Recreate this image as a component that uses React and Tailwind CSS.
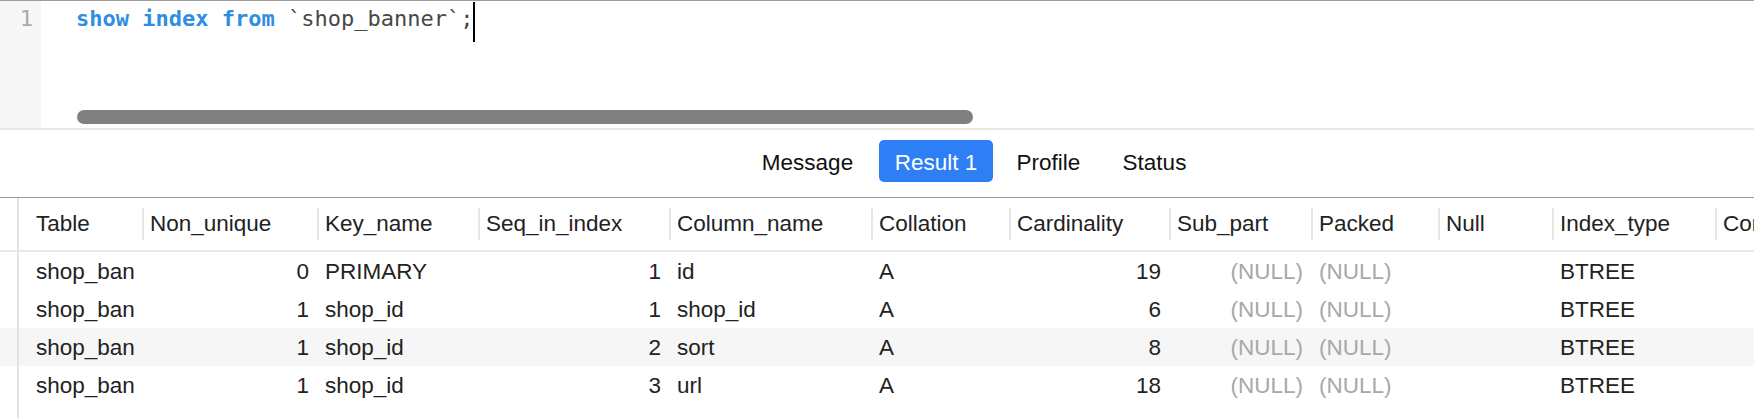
import React from 'react';

const columns = [
    { id: 'Table', width: 'w-[123px]', first: true },
    { id: 'Non_unique', width: 'w-[175px]', right: true },
    { id: 'Key_name', width: 'w-[161px]' },
    { id: 'Seq_in_index', width: 'w-[191px]', right: true },
    { id: 'Column_name', width: 'w-[202px]' },
    { id: 'Collation', width: 'w-[138px]' },
    { id: 'Cardinality', width: 'w-[160px]', right: true },
    { id: 'Sub_part', width: 'w-[142px]', right: true },
    { id: 'Packed', width: 'w-[127px]' },
    { id: 'Null', width: 'w-[114px]' },
    { id: 'Index_type', width: 'w-[163px]' },
    { id: 'Comment', width: 'w-[200px]' },
];

const rows = [
    ['shop_banner', '0', 'PRIMARY', '1', 'id', 'A', '19', null, null, '', 'BTREE', ''],
    ['shop_banner', '1', 'shop_id', '1', 'shop_id', 'A', '6', null, null, '', 'BTREE', ''],
    ['shop_banner', '1', 'shop_id', '2', 'sort', 'A', '8', null, null, '', 'BTREE', ''],
    ['shop_banner', '1', 'shop_id', '3', 'url', 'A', '18', null, null, '', 'BTREE', ''],
];

const tabs = [
    { id: 'Message', width: 'w-[125px]' },
    { id: 'Result 1', width: 'w-[114px]', active: true },
    { id: 'Profile', width: 'w-[101px]' },
    { id: 'Status', width: 'w-[101px]' },
];

const Editor = () => (
    <div className="h-[130px] shrink-0 flex border-t border-[#9c9c9c] border-b-2 border-b-[#e7e7e7]">
        {/* Gutter */}
        <div className="w-[41px] bg-[#f7f7f7] pt-[5px] pr-[8px] text-right text-[22px] leading-[26px] text-[#a9a9a9] font-['DejaVu_Sans_Mono',monospace]">
            1
        </div>

        {/* Code */}
        <div className="flex-1 flex flex-col justify-between pb-[4px]">
            <div className="pt-[5px] pl-[35px] text-[22px] leading-[26px] whitespace-pre font-['DejaVu_Sans_Mono',monospace]">
                <span className="font-bold text-[#2f8de4]">show</span>
                <span> </span>
                <span className="font-bold text-[#2f8de4]">index</span>
                <span> </span>
                <span className="font-bold text-[#2f8de4]">from</span>
                <span className="text-[#474747]"> `shop_banner`;</span>
                <span className="relative inline-block w-0 h-[26px] align-top">
                    <span className="absolute left-[0px] -top-[4px] w-[2px] h-[40px] bg-black" />
                </span>
            </div>
            <div className="ml-[36px] w-[896px] h-[14px] rounded-full bg-[#808080]" />
        </div>
    </div>
);

const TabBar = () => (
    <div className="h-[68px] shrink-0 border-b border-[#9a9a9a] pt-[10px] pl-[745px] flex items-start gap-[5px]">
        {tabs.map((tab, i) => (
            <div
                key={tab.id}
                className={`${tab.width} h-[42px] pt-[3px] flex items-center justify-center rounded-[5px] text-[22.5px] ${i === 1 ? 'ml-[4px]' : ''} ${tab.active ? 'bg-[#2e7ff6] text-white' : 'text-[#111111]'}`}
            >
                {tab.id}
            </div>
        ))}
    </div>
);

const ResultTable = () => (
    <div className="flex-1 flex flex-col text-[22.5px] text-[#222222]">
        {/* Header */}
        <div className="h-[54px] shrink-0 flex border-b-2 border-[#e8e8e8]">
            <div className="w-[19px] shrink-0 border-r-2 border-[#e3e3e3]" />
            {columns.map((col) => (
                <div key={col.id} className={`${col.width} shrink-0 flex items-center whitespace-nowrap overflow-hidden`}>
                    {col.first ? (
                        <span className="pl-[17px]">{col.id}</span>
                    ) : (
                        <>
                            <div className="w-[2px] h-[32px] shrink-0 bg-[#e6e6e6]" />
                            <span className="pl-[6px]">{col.id}</span>
                        </>
                    )}
                </div>
            ))}
        </div>

        {/* Rows */}
        {rows.map((row, r) => (
            <div key={r} className={`h-[38px] shrink-0 flex ${r === 2 ? 'bg-[#f6f6f6]' : ''}`}>
                <div className="w-[19px] shrink-0 border-r-2 border-[#e3e3e3]" />
                {columns.map((col, c) => {
                    const value = row[c];
                    if (col.first) {
                        return (
                            <div key={col.id} className={`${col.width} shrink-0 pl-[17px] pt-[2px] leading-[36px]`}>
                                <div className="w-[99px] overflow-hidden whitespace-nowrap">{value}</div>
                            </div>
                        );
                    }
                    return (
                        <div
                            key={col.id}
                            className={`${col.width} shrink-0 pt-[2px] leading-[36px] whitespace-nowrap overflow-hidden ${col.right ? 'text-right pr-[8px]' : 'pl-[8px]'} ${value === null ? 'text-[#a8a8a8]' : ''}`}
                        >
                            {value === null ? '(NULL)' : value}
                        </div>
                    );
                })}
            </div>
        ))}

        {/* Empty space under the rows */}
        <div className="flex-1 flex">
            <div className="w-[19px] shrink-0 border-r-2 border-[#e3e3e3]" />
        </div>
    </div>
);

export default function App() {
    return (
        <div className="w-[1754px] h-[418px] overflow-hidden bg-white flex flex-col font-['Liberation_Sans',Arial,sans-serif]">
            <Editor />
            <TabBar />
            <ResultTable />
        </div>
    );
}
